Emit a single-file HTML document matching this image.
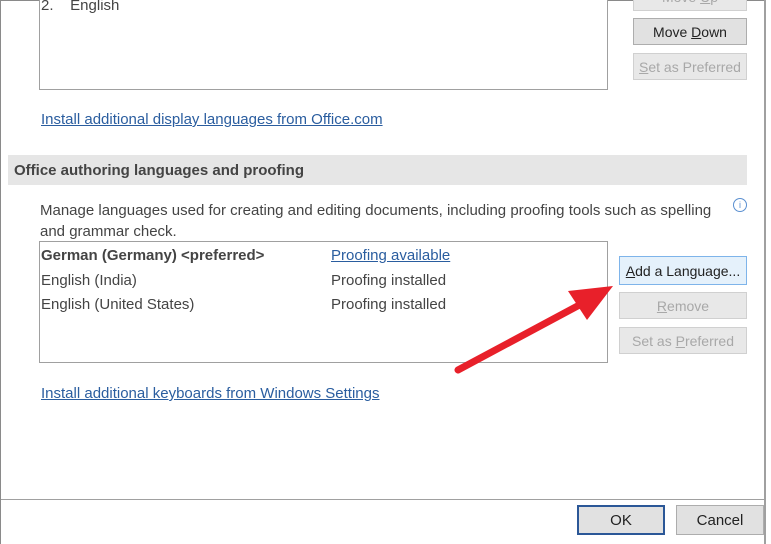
<!DOCTYPE html>
<html><head><style>
body{margin:0;width:771px;height:544px;overflow:hidden;background:#fff;font-family:"Liberation Sans",sans-serif;font-size:15px;color:#444;position:relative}
.a{position:absolute;white-space:nowrap}
.box{position:absolute;border:1px solid #a0a0a0;background:#fff}
.btn{position:absolute;border:1px solid #adadad;background:#e1e1e1;text-align:center;color:#222;box-sizing:border-box;font-size:14px}
.dis{border-color:#d0d0d0;background:#e8e8e8;color:#a8a8a8}
.lnk{color:#2a5d9f;text-decoration:underline}
</style></head><body>
<div class="a" style="left:0;top:0;width:765px;height:500px;border-left:1px solid #8a8a8a;border-top:1px solid #8a8a8a;border-right:1px solid #a0a0a0;border-bottom:1px solid #a0a0a0;box-sizing:border-box"></div>
<div class="a" style="left:0;top:0;width:1px;height:544px;background:#8a8a8a"></div>
<div class="a" style="left:764px;top:0;width:2px;height:544px;background:#a0a0a0"></div>
<div class="box" style="left:39px;top:-5px;width:567px;height:93px"></div>
<div class="a" style="left:41px;top:-3px">2.&nbsp;&nbsp;&nbsp;&nbsp;English</div>
<div class="btn dis" style="left:633px;top:-16px;width:114px;height:27px;line-height:25px">Move <u>U</u>p</div>
<div class="btn" style="left:633px;top:18px;width:114px;height:27px;line-height:26px">Move <u>D</u>own</div>
<div class="btn dis" style="left:633px;top:53px;width:114px;height:27px;line-height:26px"><u>S</u>et as Preferred</div>
<div class="a lnk" style="left:41px;top:111px">Install additional display languages from Office.com</div>
<div class="a" style="left:8px;top:155px;width:739px;height:30px;background:#e6e6e6"></div>
<div class="a" style="left:14px;top:162px;font-weight:bold;color:#444">Office authoring languages and proofing</div>
<div class="a" style="left:40px;top:200px;line-height:21px">Manage languages used for creating and editing documents, including proofing tools such as spelling<br>and grammar check.</div>
<div class="a" style="left:733px;top:198px;width:12px;height:12px;border:1px solid #5a8fd0;border-radius:50%;font-size:9px;color:#5a8fd0;text-align:center;line-height:12px">i</div>
<div class="box" style="left:39px;top:241px;width:567px;height:120px"></div>
<div class="a" style="left:41px;top:247px;font-weight:bold;color:#444">German (Germany) &lt;preferred&gt;</div>
<div class="a lnk" style="left:331px;top:247px">Proofing available</div>
<div class="a" style="left:41px;top:272px">English (India)</div>
<div class="a" style="left:331px;top:272px">Proofing installed</div>
<div class="a" style="left:41px;top:296px">English (United States)</div>
<div class="a" style="left:331px;top:296px">Proofing installed</div>
<div class="btn" style="left:619px;top:256px;width:128px;height:29px;line-height:28px;background:#e5f1fb;border-color:#7eb4ea"><u>A</u>dd a Language...</div>
<div class="btn dis" style="left:619px;top:292px;width:128px;height:27px;line-height:26px"><u>R</u>emove</div>
<div class="btn dis" style="left:619px;top:327px;width:128px;height:27px;line-height:26px">Set as <u>P</u>referred</div>
<div class="a lnk" style="left:41px;top:385px">Install additional keyboards from Windows Settings</div>
<div class="btn" style="left:577px;top:505px;width:88px;height:30px;line-height:27px;border:2px solid #2b5797;font-size:15px">OK</div>
<div class="btn" style="left:676px;top:505px;width:88px;height:30px;line-height:29px;font-size:15px">Cancel</div>
<svg class="a" style="left:0;top:0" width="771" height="544"><line x1="458" y1="370" x2="585" y2="302" stroke="#e8202a" stroke-width="7" stroke-linecap="round"/><polygon points="613,286 568,291 587,320" fill="#e8202a"/></svg>
</body></html>
